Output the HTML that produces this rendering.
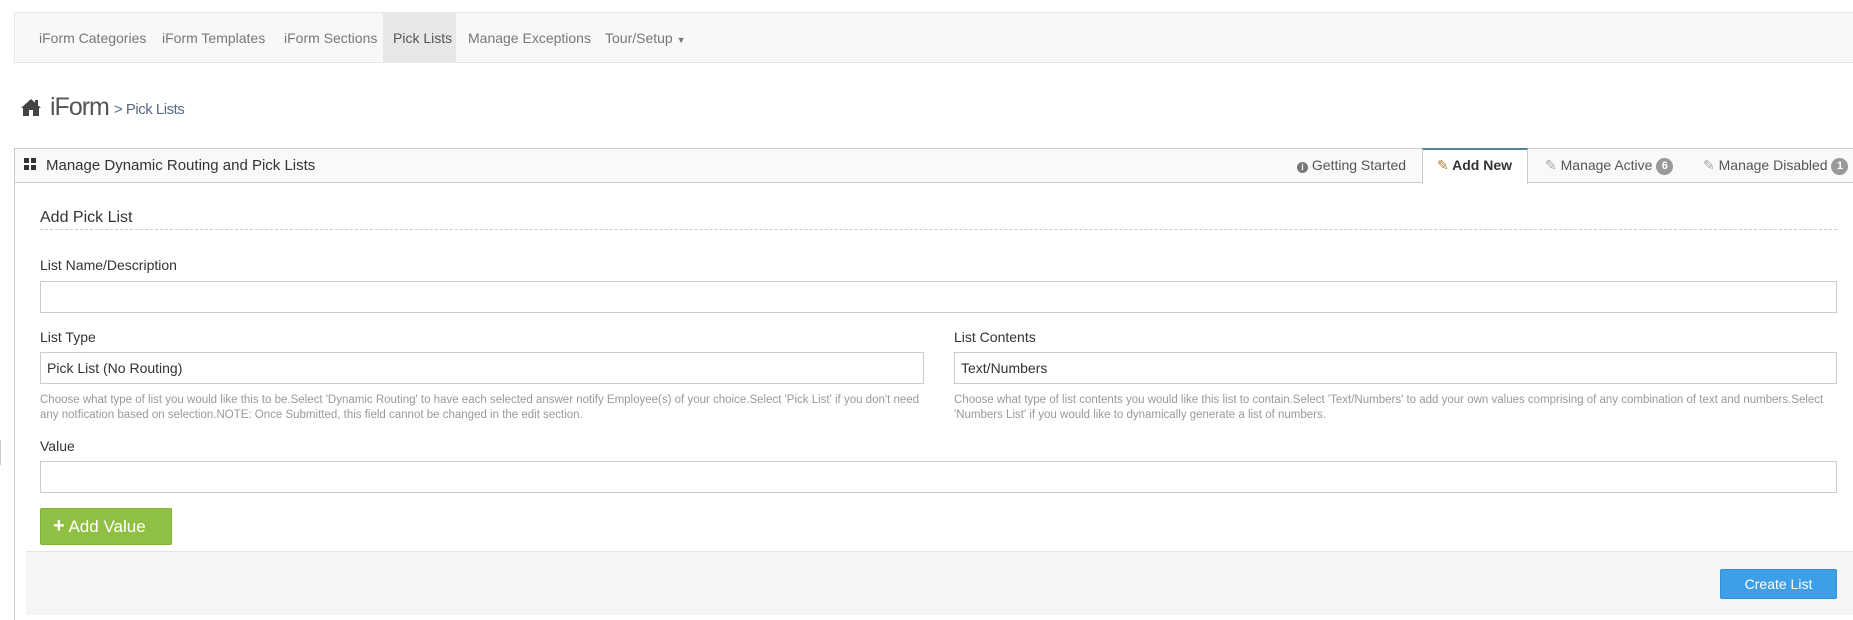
<!DOCTYPE html>
<html><head><meta charset="utf-8"><style>
*{box-sizing:border-box;margin:0;padding:0}
body{width:1853px;height:620px;overflow:hidden;background:#fff;font-family:"Liberation Sans",sans-serif;color:#333;position:relative}
.abs{position:absolute}
.nav{left:14px;top:12px;width:1839px;height:51px;background:#f8f8f8;border:1px solid #e7e7e7;border-right:none}
.nav span{position:absolute;top:17px;font-size:14px;color:#777}
.nav .act{top:0;height:49px;background:#e7e7e7;padding-top:17px;color:#555}
.panel{left:14px;top:148px;width:1839px;height:472px;border-left:1px solid #ccc;border-top:1px solid #ccc}
.ph{left:14px;top:148px;width:1839px;height:35px;background:#f9f9f9;border:1px solid #ccc;border-right:none}
label{position:absolute;font-size:14px;color:#333}
.inp{position:absolute;height:32px;border:1px solid #ccc;background:#fff;font-size:14px;padding:7px 6px;color:#333}
.help{position:absolute;font-size:11.5px;color:#999;line-height:15px}
.tab{position:absolute;top:157px;font-size:14px;color:#555}
.badge{display:inline-block;width:17px;height:17px;border-radius:9px;background:#999;color:#fff;font-size:11px;text-align:center;line-height:17px;font-weight:bold;vertical-align:1px}
</style></head><body>
<div class="abs" style="left:0;top:440px;width:1px;height:25px;background:#ccc"></div>
<div class="abs nav">
<span style="left:24px">iForm Categories</span>
<span style="left:147px">iForm Templates</span>
<span style="left:269px">iForm Sections</span>
<span class="act" style="left:368px;width:73px;padding-left:10px">Pick Lists</span>
<span style="left:453px">Manage Exceptions</span>
<span style="left:590px">Tour/Setup <span style="position:static;font-size:9px">▼</span></span>
</div>
<svg class="abs" style="left:20px;top:98px" width="22" height="19" viewBox="0 0 22 19"><path d="M11 1 L1 10 L3 10 L3 18 L9 18 L9 12 L13 12 L13 18 L19 18 L19 10 L21 10 Z" fill="#444"/><rect x="15" y="2" width="3" height="5" fill="#444"/></svg>
<div class="abs" style="left:50px;top:93px;font-size:25px;color:#555;letter-spacing:-1px">iForm</div>
<div class="abs" style="left:114px;top:101px;font-size:15px;color:#5a6a82;letter-spacing:-0.5px">&gt; Pick Lists</div>
<div class="abs panel"></div>
<div class="abs ph"></div>
<svg class="abs" style="left:24px;top:158px" width="12" height="12"><rect x="0" y="0" width="5" height="5" fill="#333"/><rect x="7" y="0" width="5" height="5" fill="#333"/><rect x="0" y="7" width="5" height="5" fill="#333"/><rect x="7" y="7" width="5" height="5" fill="#333"/></svg>
<div class="abs" style="left:46px;top:157px;font-size:15px;color:#333">Manage Dynamic Routing and Pick Lists</div>
<div class="tab" style="left:1297px"><span style="display:inline-block;width:11px;height:11px;border-radius:6px;background:#777;color:#fff;font-size:9px;text-align:center;line-height:11px;font-weight:bold">i</span> Getting Started</div>
<div class="abs" style="left:1422px;top:148px;width:106px;height:36px;background:#fff;border:1px solid #ccc;border-bottom:none;border-top:2px solid #4f8798"></div>
<div class="tab" style="left:1437px;font-weight:bold;color:#333"><span style="color:#b08040;font-weight:normal">✎</span> Add New</div>
<div class="tab" style="left:1545px"><span style="color:#aaa">✎</span> Manage Active <span class="badge">6</span></div>
<div class="tab" style="left:1703px"><span style="color:#aaa">✎</span> Manage Disabled <span class="badge">1</span></div>
<div class="abs" style="left:40px;top:209px;font-size:16px;color:#333">Add Pick List</div>
<div class="abs" style="left:40px;top:229px;width:1797px;border-top:1px dashed #ccc"></div>
<label style="left:40px;top:257px">List Name/Description</label>
<div class="inp" style="left:40px;top:281px;width:1797px"></div>
<label style="left:40px;top:329px">List Type</label>
<div class="inp" style="left:40px;top:352px;width:884px">Pick List (No Routing)</div>
<div class="help" style="left:40px;top:393px;width:880px">Choose what type of list you would like this to be.Select 'Dynamic Routing' to have each selected answer notify Employee(s) of your choice.Select 'Pick List' if you don't need any notfication based on selection.NOTE: Once Submitted, this field cannot be changed in the edit section.</div>
<label style="left:954px;top:329px">List Contents</label>
<div class="inp" style="left:954px;top:352px;width:883px">Text/Numbers</div>
<div class="help" style="left:954px;top:393px;width:890px">Choose what type of list contents you would like this list to contain.Select 'Text/Numbers' to add your own values comprising of any combination of text and numbers.Select 'Numbers List' if you would like to dynamically generate a list of numbers.</div>
<label style="left:40px;top:438px">Value</label>
<div class="inp" style="left:40px;top:461px;width:1797px"></div>
<div class="abs" style="left:40px;top:508px;width:132px;height:37px;background:#8fc043;border:1px solid #7fae39;border-radius:2px;color:#fff;font-size:17px;padding:8px 0 0 12px"><b style="font-size:20px;line-height:16px">+</b> Add Value</div>
<div class="abs" style="left:26px;top:551px;width:1827px;height:64px;background:#f5f5f5;border-top:1px solid #e5e5e5"></div>
<div class="abs" style="left:1720px;top:569px;width:117px;height:30px;background:#3d9fe8;border:1px solid #3591d6;border-radius:2px;color:#fff;font-size:14px;text-align:center;line-height:28px">Create List</div>
</body></html>
